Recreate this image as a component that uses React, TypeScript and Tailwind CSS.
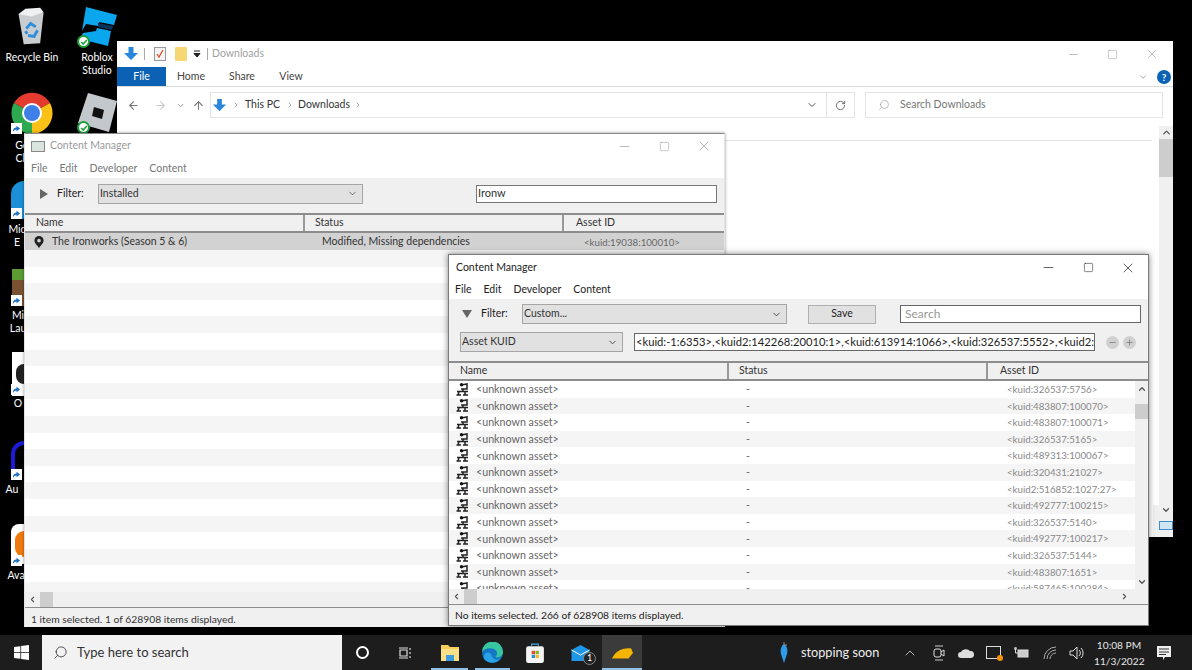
import { ArrowLeft, ArrowRight, ArrowUp, ChevronDown, ChevronLeft, ChevronRight, ChevronUp, Minus, Plus, RotateCw, Search, Square, X } from "lucide-react"

const kuids = [
  "<kuid:326537:5756>",
  "<kuid:483807:100070>",
  "<kuid:483807:100071>",
  "<kuid:326537:5165>",
  "<kuid:489313:100067>",
  "<kuid:320431:21027>",
  "<kuid2:516852:1027:27>",
  "<kuid:492777:100215>",
  "<kuid:326537:5140>",
  "<kuid:492777:100217>",
  "<kuid:326537:5144>",
  "<kuid:483807:1651>",
  "<kuid:587465:100284>",
]

function Shortcut() {
  return (
    <div className="absolute bottom-0 left-0 flex h-[11px] w-[11px] items-center justify-center bg-white">
      <svg viewBox="0 0 10 10" className="h-[9px] w-[9px]">
        <path d="M1 9 C1 5 3 4 5 4 V2 L9 5 L5 8 V6 C3 6 2 7 1 9Z" fill="#1a6fc4" />
      </svg>
    </div>
  )
}

function Check() {
  return (
    <div className="absolute flex h-[13px] w-[13px] items-center justify-center rounded-full border-2 border-[#1f9d3a] bg-white">
      <svg viewBox="0 0 10 10" className="h-[8px] w-[8px]">
        <path d="M1.5 5 L4 7.5 L8.5 2.5" stroke="#1f9d3a" strokeWidth="2" fill="none" />
      </svg>
    </div>
  )
}

function DesktopLabel({ x, y, w, lines }: { x: number; y: number; w: number; lines: string[] }) {
  return (
    <div className="absolute text-center text-[10.5px] leading-[13px] text-white" style={{ left: x, top: y, width: w }}>
      {lines.map((l) => (
        <div key={l} className="whitespace-nowrap">{l}</div>
      ))}
    </div>
  )
}

function Desktop() {
  return (
    <>
      {/* recycle bin */}
      <svg viewBox="0 0 34 44" className="absolute left-[15px] top-[7px] h-[38px] w-[33px]">
        <path d="M2 8 L31 6 L27 42 L8 43 Z" fill="#c9cdd0" />
        <path d="M2 8 L10 2 L27 1 L31 6 L17 11 Z" fill="#eef0f1" />
        <path d="M11 25 L16 19 L22 23 M24 27 L20 34 L13 33 M10 28 L12 31" stroke="#2d8fdd" strokeWidth="3.4" fill="none" />
      </svg>
      <DesktopLabel x={2} y={51} w={60} lines={["Recycle Bin"]} />

      {/* roblox studio */}
      <svg viewBox="0 0 40 40" className="absolute left-[78px] top-[7px] h-[40px] w-[40px]">
        <path d="M8 0 L39 8 L36 18 L21 15 L20 19 L8 17 L4 24 Z" fill="#0aa6ee" />
        <path d="M5 26 L18 24 L19 21 L33 24 L30 39 L2 32 Z" fill="#0aa6ee" />
        <path d="M20 16 L35 19 L34 23 L20 20 Z" fill="#06345a" />
      </svg>
      <div className="absolute left-[77px] top-[35px]"><Check /></div>
      <DesktopLabel x={67} y={51} w={60} lines={["Roblox", "Studio"]} />

      {/* chrome */}
      <svg viewBox="0 0 42 42" className="absolute left-[11px] top-[92px] h-[42px] w-[42px]">
        <path d="M21 21 L3 11 A21 21 0 0 1 39 11 Z" fill="#e33b2e" />
        <path d="M21 21 L3 11 A21 21 0 0 0 21 42 Z" fill="#2da94f" />
        <path d="M21 21 L39 11 A21 21 0 0 1 21 42 Z" fill="#fbc116" />
        <circle cx="21" cy="21" r="10" fill="#fff" />
        <circle cx="21" cy="21" r="8" fill="#3f7fe8" />
      </svg>
      <div className="absolute left-[11px] top-[123px] h-[11px] w-[11px]"><Shortcut /></div>
      <DesktopLabel x={-8} y={139} w={60} lines={["Go", "Ch"]} />

      {/* roblox */}
      <svg viewBox="0 0 40 40" className="absolute left-[78px] top-[93px] h-[40px] w-[40px]">
        <path d="M10 0 L39 8 L31 39 L0 30 Z" fill="#c3c8cc" />
        <path d="M16 14 L26 17 L24 26 L14 23Z" fill="#111" />
      </svg>
      <div className="absolute left-[77px] top-[121px]"><Check /></div>

      {/* edge */}
      <div className="absolute left-[11px] top-[181px] h-[38px] w-[13px] rounded-l-full bg-[#1b8fd8]" />
      <div className="absolute left-[11px] top-[208px] h-[11px] w-[11px]"><Shortcut /></div>
      <DesktopLabel x={-13} y={223} w={60} lines={["Mic", "E"]} />

      {/* minecraft */}
      <div className="absolute left-[12px] top-[269px] flex h-[37px] w-[12px] flex-col">
        <div className="h-[11px] bg-[#5d9c33]" />
        <div className="flex-1 bg-[#7a5232]" />
      </div>
      <div className="absolute left-[11px] top-[295px] h-[11px] w-[11px]"><Shortcut /></div>
      <DesktopLabel x={-12} y={309} w={60} lines={["Mi", "Lau"]} />

      {/* obs */}
      <div className="absolute left-[12px] top-[352px] flex h-[44px] w-[12px] items-center justify-end bg-white">
        <div className="h-[20px] w-[8px] rounded-l-full bg-[#222]" />
      </div>
      <div className="absolute left-[11px] top-[384px] h-[11px] w-[11px]"><Shortcut /></div>
      <DesktopLabel x={-12} y={397} w={60} lines={["O"]} />

      {/* audacity */}
      <div className="absolute left-[11px] top-[441px] h-[30px] w-[13px] rounded-tl-full border-l-[4px] border-t-[4px] border-[#1b1bd8]" />
      <div className="absolute left-[11px] top-[469px] h-[11px] w-[11px]"><Shortcut /></div>
      <DesktopLabel x={-18} y={483} w={60} lines={["Au"]} />

      {/* avast */}
      <div className="absolute left-[11px] top-[524px] flex h-[40px] w-[13px] items-center justify-end rounded-tl-lg bg-white">
        <div className="h-[26px] w-[9px] rounded-l-full bg-[#f07a10]" />
      </div>
      <div className="absolute left-[11px] top-[555px] h-[11px] w-[11px]"><Shortcut /></div>
      <DesktopLabel x={-14} y={569} w={60} lines={["Ava"]} />
    </>
  )
}

function DownloadArrow({ size = 16 }: { size?: number }) {
  return (
    <svg viewBox="0 0 16 16" style={{ width: size, height: size }}>
      <path d="M5.5 1 H10.5 V7 H15 L8 14 L1 7 H5.5 Z" fill="#2a86dc" />
    </svg>
  )
}

function Explorer() {
  return (
    <div className="absolute left-[117px] top-[41px] flex h-[496px] w-[1056px] flex-col bg-white text-[#555]">
      <div className="flex h-[26px] shrink-0 items-center">
        <div className="ml-[6px]"><DownloadArrow /></div>
        <div className="ml-[5px] h-[12px] w-px bg-[#aaa]" />
        <svg viewBox="0 0 12 14" className="ml-[9px] h-[14px] w-[12px]">
          <rect x="0.5" y="0.5" width="11" height="13" fill="#f4f4f4" stroke="#999" />
          <path d="M3 7 L5 10 L9 3" stroke="#e0532a" strokeWidth="1.3" fill="none" />
        </svg>
        <div className="ml-[9px] h-[14px] w-[12px] rounded-[1px] bg-[#f7d774]" />
        <svg viewBox="0 0 8 8" className="ml-[6px] h-[8px] w-[8px]">
          <path d="M1 1 H7 M1 3.5 H7 L4 7 Z" stroke="#222" fill="#222" />
        </svg>
        <div className="ml-[6px] h-[12px] w-px bg-[#aaa]" />
        <span className="ml-[4px] text-[10.5px] text-[#a2a2a2]">Downloads</span>
        <div className="ml-auto flex items-center text-[#8a8a8a]">
          <div className="flex w-[40px] justify-center"><Minus size={13} strokeWidth={1} /></div>
          <div className="flex w-[38px] justify-center"><Square size={11} strokeWidth={1} /></div>
          <div className="flex w-[42px] justify-center"><X size={14} strokeWidth={1} /></div>
        </div>
      </div>
      <div className="flex h-[20px] shrink-0 items-stretch border-b border-[#dcdcdc] text-[10.5px] text-[#444]">
        <div className="flex w-[49px] items-center justify-center bg-[#0b62b5] text-white">File</div>
        <div className="ml-[12px] flex w-[26px] items-center justify-center">Home</div>
        <div className="ml-[25px] flex w-[26px] items-center justify-center">Share</div>
        <div className="ml-[25px] flex w-[22px] items-center justify-center">View</div>
        <div className="ml-auto mr-[2px] flex items-center gap-[9px]">
          <ChevronDown size={10} className="text-[#999]" />
          <div className="flex h-[14px] w-[14px] items-center justify-center rounded-full bg-[#0b62b5] text-[10px] font-bold leading-none text-white">?</div>
        </div>
      </div>
      <div className="flex h-[34px] shrink-0 items-center pb-[2px] pt-[4px]">
        <div className="ml-[6px] flex w-[20px] justify-center"><ArrowLeft size={13} className="text-[#777]" /></div>
        <div className="ml-[7px] flex w-[20px] justify-center"><ArrowRight size={13} className="text-[#ccc]" /></div>
        <div className="ml-[4px] flex w-[12px] justify-center"><ChevronDown size={9} className="text-[#777]" /></div>
        <div className="ml-[3px] flex w-[18px] justify-center"><ArrowUp size={13} className="text-[#777]" /></div>
        <div className="ml-[3px] flex h-[26px] w-[617px] items-center border border-[#e4e4e4] text-[10.5px] text-[#333]">
          <div className="ml-[1px]"><DownloadArrow size={15} /></div>
          <ChevronRight size={8} className="ml-[5px] text-[#777]" />
          <span className="ml-[5px]">This PC</span>
          <ChevronRight size={8} className="ml-[6px] text-[#777]" />
          <span className="ml-[4px]">Downloads</span>
          <ChevronRight size={8} className="ml-[4px] text-[#777]" />
          <ChevronDown size={12} className="ml-auto mr-[8px] text-[#555]" />
        </div>
        <div className="flex h-[26px] w-[28px] items-center justify-center border-y border-r border-[#e4e4e4]">
          <RotateCw size={11} className="text-[#666]" />
        </div>
        <div className="ml-[10px] flex h-[26px] w-[298px] items-center border border-[#e4e4e4] text-[10.5px] text-[#777]">
          <Search size={12} strokeWidth={1.2} className="ml-[12px] -scale-x-100 text-[#999]" />
          <span className="ml-[10px]">Search Downloads</span>
        </div>
      </div>
      <div className="flex flex-1 pt-[5px]">
        <div className="mr-[7px] h-[15px] flex-1 border-b border-[#e5e5e5]" />
        <div className="flex w-[14px] flex-col bg-[#f0f0f0]">
          <ChevronUp size={11} strokeWidth={3} className="mx-auto my-[1px] text-[#555]" />
          <div className="h-[38px] bg-[#cdcdcd]" />
          <div className="flex-1" />
        </div>
      </div>
      <div className="flex h-[32px] shrink-0 justify-end">
        <div className="flex w-[20px] flex-col items-center gap-[2px] bg-[#f0f0f0] pl-[6px]">
          <ChevronDown size={10} strokeWidth={3} className="text-[#555]" />
          <div className="mt-[4px] h-[9px] w-[14px] border border-[#3d8fc9] bg-[#cfe6f5]" />
        </div>
      </div>
    </div>
  )
}

function ColumnHeader() {
  return (
    <div className="grid h-[20px] shrink-0 grid-cols-[280px_259px_1fr] items-center border-y-2 border-[#8d8d8d] bg-[#f0f0f0] text-[10.5px] text-[#333]">
      <div className="flex h-full items-center border-r-2 border-[#999] pl-[11px]">Name</div>
      <div className="flex h-full items-center border-r-2 border-[#999] pl-[10px]">Status</div>
      <div className="pl-[12px]">Asset ID</div>
    </div>
  )
}

function TitleBar({ active }: { active: boolean }) {
  const tone = active ? "text-[#222]" : "text-[#9a9a9a]"
  return (
    <div className={`flex shrink-0 items-center ${tone}`}>
      {!active && <div className="ml-[6px] mr-[5px] h-[11px] w-[14px] border border-[#888] bg-[#dbe5df]" />}
      <span className={`text-[10.5px] ${active ? "ml-[7px]" : ""}`}>Content Manager</span>
      <div className="ml-auto flex items-center">
        <div className="flex w-[40px] justify-center"><Minus size={15} strokeWidth={1.1} /></div>
        <div className="flex w-[40px] justify-center"><Square size={11} strokeWidth={1.2} /></div>
        <div className="flex w-[40px] justify-center"><X size={16} strokeWidth={1.1} /></div>
      </div>
    </div>
  )
}

function MenuBar({ active }: { active: boolean }) {
  return (
    <div className={`flex h-[19px] shrink-0 items-center gap-[12px] pl-[6px] text-[10.5px] ${active ? "text-[#222]" : "text-[#777]"}`}>
      <span>File</span>
      <span>Edit</span>
      <span>Developer</span>
      <span>Content</span>
    </div>
  )
}

function Dropdown({ label, w, active }: { label: string; w: number; active: boolean }) {
  return (
    <div className="flex h-[20px] items-center border border-[#a5a5a5] bg-[#e1e1e1] pl-[1px] text-[10.5px] text-[#333]" style={{ width: w }}>
      {label}
      <ChevronDown size={11} className={`ml-auto mr-[4px] ${active ? "text-[#444]" : "text-[#666]"}`} />
    </div>
  )
}

function HScroll() {
  return (
    <div className="flex h-[15px] shrink-0 items-center bg-[#f0f0f0]">
      <ChevronLeft size={9} strokeWidth={3} className="ml-[3px] text-[#555]" />
      <div className="ml-[3px] h-full w-[13px] bg-[#cdcdcd]" />
      <ChevronRight size={9} strokeWidth={3} className="ml-auto mr-[19px] text-[#555]" />
    </div>
  )
}

function BackgroundManager() {
  const rows = Array.from({ length: 21 }, (_, i) => i)
  return (
    <div className="absolute left-[24px] top-[133px] flex h-[494px] w-[701px] flex-col border-x border-t border-[#8a8a8a] border-x-[#e2e2e2] bg-white shadow-[0_0_3px_rgba(0,0,0,0.4)]">
      <div className="h-[25px] shrink-0"><div className="pt-[4px]"><TitleBar active={false} /></div></div>
      <MenuBar active={false} />
      <div className="flex h-[35px] shrink-0 items-center bg-[#f0f0f0] pb-[4px]">
        <div className="ml-[15px] h-0 w-0 border-y-[5px] border-l-[8px] border-y-transparent border-l-[#666]" />
        <span className="ml-[9px] w-[41px] text-[10.5px] text-[#222]">Filter:</span>
        <Dropdown label="Installed" w={265} active={false} />
        <div className="ml-[113px] flex h-[18px] w-[241px] items-center border border-[#777] bg-white pl-[1px] text-[11px] text-[#333]">Ironw</div>
      </div>
      <ColumnHeader />
      <div className="grid h-[17px] shrink-0 grid-cols-[280px_259px_1fr] items-center bg-[#d2d2d2] pt-[1px] text-[10.5px] text-[#333]">
        <div className="flex items-center pl-[9px]">
          <svg viewBox="0 0 10 13" className="h-[12px] w-[10px]">
            <path d="M5 0 A5 5 0 0 1 10 5 C10 8 7 10 5 13 C3 10 0 8 0 5 A5 5 0 0 1 5 0Z M5 3 A2 2 0 1 0 5 7 A2 2 0 1 0 5 3Z" fill="#222" fillRule="evenodd" />
          </svg>
          <span className="ml-[8px]">The Ironworks (Season 5 &amp; 6)</span>
        </div>
        <div className="pl-[17px]">Modified, Missing dependencies</div>
        <div className="pl-[20px] text-[9.7px] text-[#666]">&lt;kuid:19038:100010&gt;</div>
      </div>
      <div className="min-h-0 flex-1 overflow-hidden">
        {rows.map((i) => (
          <div key={i} className={`h-[16.6px] ${i % 2 === 0 ? "bg-[#f5f5f5]" : "bg-white"}`} />
        ))}
      </div>
      <HScroll />
      <div className="flex h-[20px] shrink-0 items-center border-t border-[#8d8d8d] bg-[#f0f0f0] pl-[6px] pt-[4px] text-[10.3px] text-[#333]">1 item selected. 1 of 628908 items displayed.</div>
    </div>
  )
}

function UnknownIcon() {
  return (
    <svg viewBox="0 0 13 13" className="ml-[7px] h-[13px] w-[13px] shrink-0">
      <path d="M5 2 L11 1 V6 H5 M7 6 V8 M1 8.5 H12 M3 8.5 L2 12 M0.5 12 H5 M9 8.5 V12 M7 12 H12" stroke="#222" strokeWidth="1.5" fill="none" />
      <circle cx="5.5" cy="1.8" r="1.7" fill="#111" />
    </svg>
  )
}

function ActiveManager() {
  return (
    <div className="absolute left-[448px] top-[254px] flex h-[372px] w-[701px] flex-col border border-[#7a7a7a] bg-white shadow-[0_0_6px_rgba(0,0,0,0.5)]">
      <div className="flex h-[25px] shrink-0 items-center"><div className="w-full"><TitleBar active /></div></div>
      <MenuBar active />
      <div className="flex h-[62px] shrink-0 flex-col bg-[#f0f0f0]">
        <div className="flex h-[30px] shrink-0 items-center">
          <div className="ml-[13px] h-0 w-0 border-x-[5px] border-t-[8px] border-x-transparent border-t-[#666]" />
          <span className="ml-[9px] w-[41px] text-[10.5px] text-[#222]">Filter:</span>
          <Dropdown label="Custom..." w={265} active />
          <div className="ml-[21px] flex h-[19px] w-[68px] items-center justify-center border border-[#b0b0b0] bg-[#e1e1e1] text-[10.5px] text-[#222]">Save</div>
          <div className="ml-[24px] flex h-[18px] w-[241px] items-center border border-[#666] bg-white pl-[4px] text-[12px] text-[#999]">Search</div>
        </div>
        <div className="flex h-[26px] shrink-0 items-center">
          <div className="ml-[11px]"><Dropdown label="Asset KUID" w={163} active /></div>
          <div className="ml-[11px] h-[18px] w-[461px] overflow-hidden whitespace-nowrap border border-[#666] bg-white pl-[1px] text-[11.2px] leading-[16px] text-[#222]">
            &lt;kuid:-1:6353&gt;,&lt;kuid2:142268:20010:1&gt;,&lt;kuid:613914:1066&gt;,&lt;kuid:326537:5552&gt;,&lt;kuid2:8
          </div>
          <div className="ml-[11px] flex h-[13px] w-[13px] items-center justify-center rounded-full bg-[#d0d0d0] text-[#777]"><Minus size={9} /></div>
          <div className="ml-[4px] flex h-[13px] w-[13px] items-center justify-center rounded-full bg-[#d0d0d0] text-[#777]"><Plus size={9} /></div>
        </div>
      </div>
      <ColumnHeader />
      <div className="flex min-h-0 flex-1">
        <div className="min-w-0 flex-1 overflow-hidden">
          {kuids.map((k, i) => (
            <div key={k} className={`grid h-[16.6px] grid-cols-[280px_259px_1fr] items-center text-[10.7px] text-[#666] ${i % 2 === 1 ? "bg-[#f5f5f5]" : "bg-white"}`}>
              <div className="flex items-center">
                <UnknownIcon />
                <span className="ml-[7px]">&lt;unknown asset&gt;</span>
              </div>
              <div className="pl-[17px]">-</div>
              <div className="pl-[19px] text-[9.7px] text-[#888]">{k}</div>
            </div>
          ))}
        </div>
        <div className="flex w-[13px] shrink-0 flex-col bg-[#f0f0f0]">
          <ChevronUp size={10} strokeWidth={3} className="mx-auto mt-[3px] text-[#555]" />
          <div className="mt-[10px] h-[15px] bg-[#cdcdcd]" />
          <ChevronDown size={10} strokeWidth={3} className="mx-auto mb-[2px] mt-auto text-[#555]" />
        </div>
      </div>
      <HScroll />
      <div className="flex h-[21px] shrink-0 items-center border-t border-[#8d8d8d] bg-[#f0f0f0] pl-[6px] pt-[1px] text-[10.3px] text-[#222]">No items selected. 266 of 628908 items displayed.</div>
    </div>
  )
}

function Taskbar() {
  return (
    <div className="absolute bottom-0 left-0 flex h-[35px] w-[1192px] items-center bg-[#1d1d1d] text-white">
      <div className="flex w-[42px] justify-center">
        <svg viewBox="0 0 16 16" className="h-[15px] w-[15px]">
          <path d="M0 2.2 L6.8 1.2 V7.5 H0 Z M7.6 1.1 L16 0 V7.5 H7.6 Z M0 8.3 H6.8 V14.7 L0 13.8 Z M7.6 8.3 H16 V16 L7.6 14.9 Z" fill="#fff" />
        </svg>
      </div>
      <div className="flex h-full w-[300px] items-center bg-[#f2f2f2] text-[#333]">
        <Search size={15} strokeWidth={1.3} className="ml-[11px] -scale-x-100" />
        <span className="ml-[9px] text-[13px]">Type here to search</span>
      </div>
      <div className="ml-[14px] h-[13px] w-[13px] rounded-full border-2 border-white" />
      <svg viewBox="0 0 16 16" className="ml-[28px] h-[16px] w-[16px]">
        <path d="M2 3 H11 M2 13 H11 M3 5 H10 V11 H3 Z M13 3 V5 M13 7 V9 M13 11 V13" stroke="#ddd" strokeWidth="1.2" fill="none" />
      </svg>
      <div className="relative ml-[27px] flex h-full w-[20px] items-center">
        <svg viewBox="0 0 20 18" className="h-[18px] w-[20px]">
          <path d="M1 1 H8 L10 3 H19 V17 H1 Z" fill="#f7ce5c" />
          <path d="M1 5 H19 V17 H1 Z" fill="#fbe08a" />
          <path d="M6 11 H14 V17 H6 Z" fill="#3c9ade" />
        </svg>
        <div className="absolute bottom-0 left-[-9px] h-[2px] w-[37px] bg-[#8fc3ea]" />
      </div>
      <div className="relative ml-[22px] flex h-full w-[21px] items-center">
        <svg viewBox="0 0 21 21" className="h-[21px] w-[21px]">
          <circle cx="10.5" cy="10.5" r="10.5" fill="#1577c4" />
          <path d="M0 10 A10.5 10.5 0 0 1 21 10 C21 14 17 16 13 15 C16 13 16 9 12 7 C7 5 2 7 0 10Z" fill="#38c6a0" />
          <path d="M9 12 C10 17 15 19 18 17 A10.5 10.5 0 0 1 2 17 C1 11 6 9 9 12Z" fill="#28a3e8" />
        </svg>
        <div className="absolute bottom-0 left-[-7px] h-[2px] w-[35px] bg-[#8fc3ea]" />
      </div>
      <svg viewBox="0 0 16 18" className="ml-[23px] h-[20px] w-[18px]">
        <rect x="0" y="3" width="16" height="15" rx="2" fill="#f4f4f4" />
        <path d="M5 3 V1 H11 V3" stroke="#3fa9e0" fill="none" />
        <rect x="5" y="7" width="3" height="3" fill="#e8502a" /><rect x="8.5" y="7" width="3" height="3" fill="#7fba2e" />
        <rect x="5" y="10.5" width="3" height="3" fill="#2a8fdc" /><rect x="8.5" y="10.5" width="3" height="3" fill="#f7b916" />
      </svg>
      <div className="relative ml-[26px] h-[16px] w-[21px]">
        <svg viewBox="0 0 18 16" className="h-[16px] w-[21px]">
          <path d="M0 5 L9 0 L18 5 V16 H0 Z" fill="#1e97e8" />
          <path d="M0 5 L9 10 L18 5" stroke="#fff" fill="none" />
        </svg>
        <div className="absolute bottom-[-4px] right-[-5px] flex h-[13px] w-[13px] items-center justify-center rounded-full border border-[#888] bg-[#222] text-[9px]">1</div>
      </div>
      <div className="relative ml-[11px] flex h-full w-[40px] items-center justify-center bg-[#3b3b3b]">
        <svg viewBox="0 0 24 12" className="h-[12px] w-[22px]">
          <path d="M1 12 C5 4 12 0 22 1 L24 6 L19 12 Z" fill="#f5b400" />
        </svg>
        <div className="absolute bottom-0 left-0 h-[2px] w-full bg-[#8fc3ea]" />
      </div>
      <svg viewBox="0 0 10 22" className="ml-[137px] h-[22px] w-[10px]">
        <path d="M5 2 C8 4 9 8 8 12 L5 21 L2 12 C1 8 2 4 5 2Z" fill="#2d9be8" />
        <path d="M5 0 V3 H8" stroke="#888" fill="none" />
      </svg>
      <span className="ml-[12px] w-[78px] whitespace-nowrap text-[12.7px] text-[#eee]">stopping soon</span>
      <ChevronUp size={16} strokeWidth={1.2} className="ml-[23px] text-[#ddd]" />
      <svg viewBox="0 0 12 16" className="ml-[15px] h-[16px] w-[12px]">
        <path d="M2 1 H10 M2 15 H10" stroke="#ccc" /><rect x="1" y="4" width="7" height="8" rx="2" stroke="#ddd" fill="none" /><path d="M8 7 L11 5 V11 L8 9" stroke="#ddd" fill="none" />
      </svg>
      <svg viewBox="0 0 16 10" className="ml-[13px] h-[10px] w-[16px]">
        <path d="M3 10 A3 3 0 0 1 3 4 A5 4 0 0 1 12 3 A3.5 3.5 0 0 1 13 10Z" fill="#ddd" />
      </svg>
      <div className="relative ml-[12px] h-[13px] w-[15px] border border-[#ddd]">
        <div className="absolute bottom-[-3px] right-[-3px] h-[6px] w-[6px] rounded-full bg-[#f5930a]" />
      </div>
      <svg viewBox="0 0 16 12" className="ml-[12px] h-[12px] w-[16px]">
        <rect x="5" y="3" width="10" height="7" stroke="#ddd" fill="#ccc" /><path d="M1 2 H4 M2 0 V2 M3 0 V2 M2.5 2 V6 H5" stroke="#ddd" fill="none" />
      </svg>
      <svg viewBox="0 0 14 14" className="ml-[14px] h-[14px] w-[14px]">
        <path d="M1 13 A12 12 0 0 1 13 1 M4 13 A9 9 0 0 1 13 4 M7 13 A6 6 0 0 1 13 7" stroke="#aaa" strokeWidth="1" fill="none" />
      </svg>
      <svg viewBox="0 0 16 14" className="ml-[12px] h-[14px] w-[16px]">
        <path d="M1 5 H4 L8 1 V13 L4 9 H1 Z M10 4 A4 4 0 0 1 10 10 M12 2 A7 7 0 0 1 12 12" stroke="#ddd" fill="none" />
      </svg>
      <div className="ml-[9px] w-[50px] text-center text-[10.2px] leading-[16px] text-[#e5e5e5]">
        <div>10:08 PM</div>
        <div>11/3/2022</div>
      </div>
      <svg viewBox="0 0 14 14" className="ml-[13px] h-[14px] w-[14px]">
        <path d="M0 0 H14 V11 H8 L6 14 V11 H0 Z" fill="#eee" />
        <path d="M2 3 H12 M2 6 H12 M2 8.5 H9" stroke="#333" />
      </svg>
    </div>
  )
}

export default function App() {
  return (
    <div className="relative h-[670px] w-[1192px] overflow-hidden bg-black font-['Lato','Liberation_Sans',sans-serif]">
      <Desktop />
      <Explorer />
      <BackgroundManager />
      <ActiveManager />
      <Taskbar />
    </div>
  )
}
